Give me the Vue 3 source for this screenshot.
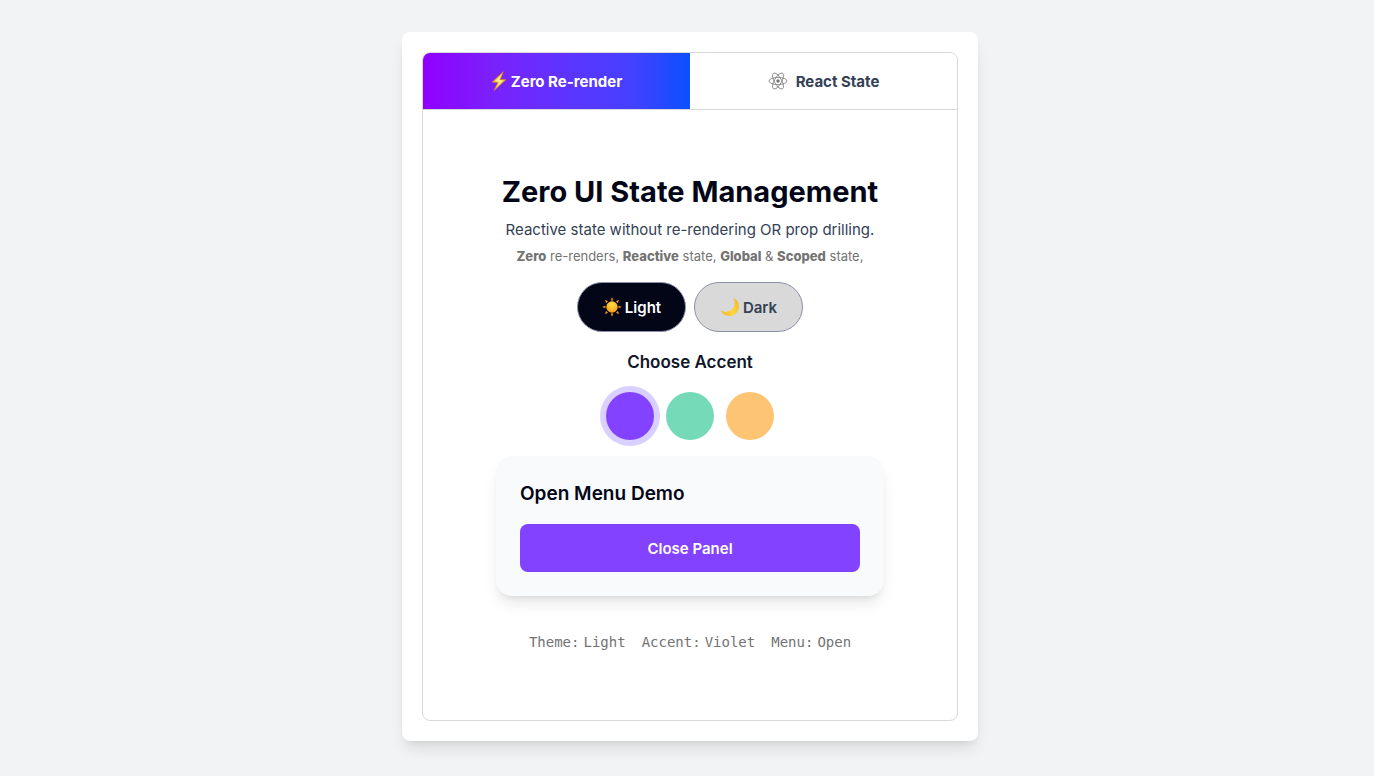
<script setup>
import { ref, computed } from "vue";

const tabs = [
  { id: "zero", name: "Zero Re-render" },
  { id: "react", name: "React State" },
];
const accents = [
  { name: "Violet", className: "violet" },
  { name: "Emerald", className: "emerald" },
  { name: "Amber", className: "amber" },
];

const activeTab = ref("zero");
const theme = ref("Light");
const accent = ref("Violet");
const menuOpen = ref(true);

const accentClass = computed(
  () => accents.find((item) => item.name == accent.value).className
);
</script>

<template>
  <main class="page">
    <div class="card">
      <div class="demo">
        <nav class="tabs">
          <button
            v-for="tab in tabs"
            :key="tab.id"
            type="button"
            class="tab"
            :class="[tab.id, { active: tab.id == activeTab }]"
            @click="activeTab = tab.id"
          >
            <svg
              v-if="tab.id == 'zero'"
              class="bolt"
              viewBox="0 0 16 20"
              aria-hidden="true"
            >
              <defs>
                <linearGradient id="bolt-fill" x1="0" y1="0" x2="1" y2="1">
                  <stop offset="0" stop-color="#f79a17" />
                  <stop offset="0.5" stop-color="#ffe45a" />
                  <stop offset="1" stop-color="#f08c12" />
                </linearGradient>
              </defs>
              <path
                d="M12.2 .8 1.4 11 7 11.4 3.2 19.2 14.8 8.8 9.2 8.4Z"
                fill="url(#bolt-fill)"
                stroke="#d9822b"
                stroke-width="0.9"
                stroke-linejoin="round"
              />
              <path d="M9.8 4.8 4.6 10l4.2.4L6.8 14.4 11.8 9.7 7.6 9.2Z" fill="#fff3a0" />
            </svg>
            <svg v-else class="atom" viewBox="0 0 20 20" aria-hidden="true">
              <g fill="none" stroke="#7c7c7c" stroke-width="0.8">
                <ellipse cx="10" cy="10" rx="9" ry="3.6" />
                <ellipse
                  cx="10"
                  cy="10"
                  rx="9"
                  ry="3.6"
                  transform="rotate(60 10 10)"
                />
                <ellipse
                  cx="10"
                  cy="10"
                  rx="9"
                  ry="3.6"
                  transform="rotate(120 10 10)"
                />
              </g>
              <circle cx="10" cy="10" r="1.7" fill="#707070" />
            </svg>
            <span>{{ tab.name }}</span>
          </button>
        </nav>

        <section class="content">
          <h1 class="title">Zero UI State Management</h1>
          <p class="subtitle">
            Reactive state without re-rendering OR prop drilling.
          </p>
          <p class="note">
            <strong>Zero</strong> re-renders, <strong>Reactive</strong> state,
            <strong>Global</strong> &amp; <strong>Scoped</strong> state,
          </p>

          <div class="themes">
            <button
              type="button"
              class="theme"
              :class="{ active: theme == 'Light' }"
              @click="theme = 'Light'"
            >
              <svg class="sun" viewBox="0 0 20 20" aria-hidden="true">
                <defs>
                  <radialGradient id="sun-fill" cx="0.5" cy="0.3" r="0.7">
                    <stop offset="0" stop-color="#ffe04a" />
                    <stop offset="1" stop-color="#f89a12" />
                  </radialGradient>
                </defs>
                <path
                  d="M9 3.2 10 .8l1 2.4ZM9 16.8l1 2.4 1-2.4ZM3.2 9 .8 10l2.4 1ZM16.8 9l2.4 1-2.4 1ZM4.3 5.7 3.3 3.3l2.4 1ZM14.3 4.3l2.4-1-1 2.4ZM4.3 14.3l-1 2.4 2.4-1ZM15.7 14.3l1 2.4-2.4-1Z"
                  fill="#f5a11a"
                  stroke="#e88b15"
                  stroke-width="0.5"
                />
                <circle cx="10" cy="10" r="5.7" fill="url(#sun-fill)" />
              </svg>
              <span>Light</span>
            </button>
            <button
              type="button"
              class="theme"
              :class="{ active: theme == 'Dark' }"
              @click="theme = 'Dark'"
            >
              <svg class="moon" viewBox="0 0 20 20" aria-hidden="true">
                <defs>
                  <linearGradient id="moon-fill" x1="1" y1="0" x2="0" y2="1">
                    <stop offset="0" stop-color="#f2b51d" />
                    <stop offset="0.6" stop-color="#fcd640" />
                    <stop offset="1" stop-color="#eeb026" />
                  </linearGradient>
                </defs>
                <path
                  d="M13 .8C17.2 2.4 19.7 6.5 18.8 11 17.9 16 13.5 19.3 8.8 19 5.2 18.8 2.1 16.8.7 13.4 4.4 15.5 9.3 15.3 12.3 12 15.4 8.7 15.6 4.1 13 .8Z"
                  fill="url(#moon-fill)"
                />
              </svg>
              <span>Dark</span>
            </button>
          </div>

          <h2 class="accent-title">Choose Accent</h2>
          <div class="accents">
            <button
              v-for="item in accents"
              :key="item.name"
              type="button"
              class="accent"
              :class="[item.className, { active: item.name == accent }]"
              :aria-label="item.name"
              @click="accent = item.name"
            ></button>
          </div>

          <div class="panel">
            <h2 class="panel-title">Open Menu Demo</h2>
            <button
              type="button"
              class="panel-button"
              :class="accentClass"
              @click="menuOpen = !menuOpen"
            >
              {{ menuOpen ? "Close Panel" : "Open Panel" }}
            </button>
          </div>

          <div class="status">
            <span class="status-item"
              ><span>Theme:</span><span>{{ theme }}</span></span
            >
            <span class="status-item"
              ><span>Accent:</span><span>{{ accent }}</span></span
            >
            <span class="status-item"
              ><span>Menu:</span><span>{{ menuOpen ? "Open" : "Closed" }}</span></span
            >
          </div>
        </section>
      </div>
    </div>
  </main>
</template>

<style>
body {
  margin: 0;
  background-color: #f1f3f5;
}
</style>

<style scoped>
* {
  box-sizing: border-box;
}

h1,
h2,
p {
  margin: 0;
}

button {
  padding: 0;
  border: 0;
  font-family: inherit;
  cursor: pointer;
}

.page {
  display: flex;
  justify-content: center;
  min-height: 100vh;
  padding: 32px 32px 35px 38px;
  background-color: #f1f3f5;
  color: #020617;
  font-family: Inter, "Liberation Sans", sans-serif;
  font-size: 15px;
  line-height: 24px;
}

.card {
  display: flex;
  width: 100%;
  max-width: 576px;
  padding: 20px;
  border-radius: 8px;
  background-color: #fff;
  box-shadow: 0 10px 15px -3px rgba(0, 0, 0, 0.1),
    0 4px 6px -4px rgba(0, 0, 0, 0.1);
}

.demo {
  flex: 1;
  overflow: hidden;
  border: 1px solid #d9d9d9;
  border-radius: 8px;
}

.tabs {
  display: flex;
  border-bottom: 1px solid #d9d9d9;
}

.tab {
  display: flex;
  flex: 1;
  align-items: center;
  justify-content: center;
  gap: 8px;
  height: 56px;
  background-color: #fff;
  color: #334155;
  font-size: 15px;
  font-weight: 700;
}
.tab.zero {
  gap: 4px;
}
.tab.active {
  background: linear-gradient(
    to right,
    #9000ff,
    #7a22fb 27%,
    #5f33fd 52%,
    #4540ff 78%,
    #0b50ff
  );
  color: #fff;
}

.bolt {
  width: 16px;
  height: 20px;
}
.atom,
.sun,
.moon {
  width: 20px;
  height: 20px;
}

.content {
  display: flex;
  flex-direction: column;
  align-items: center;
  padding: 64px 24px;
  text-align: center;
}

.title {
  font-size: 29px;
  font-weight: 700;
  line-height: 36px;
}

.subtitle {
  margin-top: 8px;
  color: #334155;
}

.note {
  margin-top: 4px;
  color: #737373;
  font-size: 13px;
  line-height: 20px;
}
.note strong {
  font-weight: 800;
}

.themes {
  display: flex;
  gap: 8px;
  margin-top: 16px;
}

.theme {
  display: flex;
  align-items: center;
  justify-content: center;
  gap: 3px;
  width: 109px;
  height: 50px;
  border: 1px solid #8b92a8;
  border-radius: 25px;
  background-color: #d9d9d9;
  color: #334155;
  font-size: 15px;
  font-weight: 600;
}
.theme.active {
  background-color: #020617;
  color: #fff;
}

.accent-title {
  margin-top: 16px;
  color: #0f172a;
  font-size: 17px;
  font-weight: 600;
  line-height: 28px;
}

.accents {
  display: flex;
  gap: 12px;
  margin-top: 16px;
}

.accent {
  width: 48px;
  height: 48px;
  border-radius: 50%;
}
.accent.active {
  box-shadow: 0 0 0 6px #d9d0ff;
}

.violet {
  background-color: #8342ff;
}
.emerald {
  background-color: #74dab8;
}
.amber {
  background-color: #fdc573;
}

.panel {
  width: 100%;
  max-width: 388px;
  margin-top: 16px;
  padding: 24px;
  border-radius: 16px;
  background-color: #f8fafc;
  box-shadow: 0 10px 15px -3px rgba(0, 0, 0, 0.1),
    0 4px 6px -4px rgba(0, 0, 0, 0.1);
}

.panel-title {
  font-size: 19px;
  font-weight: 600;
  line-height: 28px;
  text-align: left;
}

.panel-button {
  width: 100%;
  height: 48px;
  margin-top: 16px;
  border-radius: 8px;
  color: #fff;
  font-size: 15px;
  font-weight: 600;
}

.status {
  display: flex;
  gap: 16px;
  margin-top: 36px;
  color: #737373;
  font-family: "DejaVu Sans Mono", monospace;
  font-size: 14px;
  line-height: 20px;
}

.status-item {
  display: flex;
  gap: 4px;
}
</style>
